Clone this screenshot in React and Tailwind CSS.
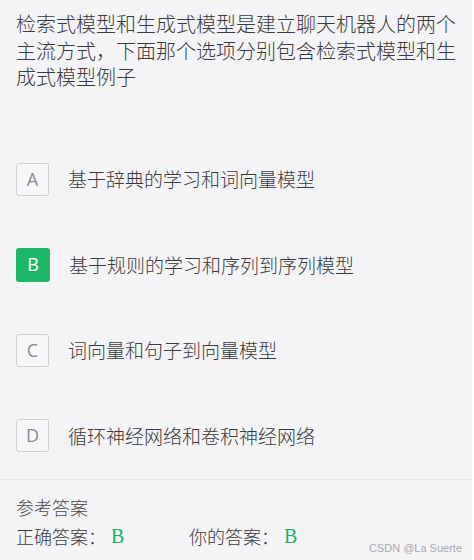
const options = [
  { key: 'A', text: '基于辞典的学习和词向量模型' },
  { key: 'B', text: '基于规则的学习和序列到序列模型', selected: true },
  { key: 'C', text: '词向量和句子到向量模型' },
  { key: 'D', text: '循环神经网络和卷积神经网络' },
];

const cjk = { fontFamily: '"Noto Sans CJK SC", "Noto Sans", sans-serif' };

export default function App() {
  return (
    <div className="w-[474px] h-[560px] bg-white overflow-hidden" style={cjk}>
      <div className="w-[472px] h-[560px] bg-[#f4f4f7] flex flex-col">
        <p className="pl-4 pr-[8px] pt-[11px] text-[20px] leading-[26.5px] text-[#3a3a3a] font-light">
          检索式模型和生成式模型是建立聊天机器人的两个主流方式，下面那个选项分别包含检索式模型和生成式模型例子
        </p>

        <div className="flex flex-col mt-[46px]">
          {options.map(opt => (
            <div key={opt.key} className="flex items-center h-[85.5px] px-4">
              <div
                className={
                  opt.selected
                    ? 'w-[34px] h-[34px] rounded-[3px] bg-[#1cb868] flex items-center justify-center text-white text-[18px]'
                    : 'w-[33px] h-[33px] rounded-[3px] border border-[#cfcfd3] bg-[#f7f7f9] flex items-center justify-center text-[#8a8a8e] text-[18px]'
                }
                style={{ fontFamily: '"Open Sans", "Noto Sans", sans-serif' }}
              >
                {opt.key}
              </div>
              <span className="ml-[19px] text-[19px] text-[#3a3a3a] font-light">{opt.text}</span>
            </div>
          ))}
        </div>

        <div className="mt-auto border-t border-[#e6e6ea] h-[82px] px-4 pt-[15px] relative">
          <div className="text-[18px] leading-[24px] text-[#4a4a4a] font-light">参考答案</div>
          <div className="flex items-center mt-[5px] text-[18px] leading-[24px] text-[#3a3a3a] font-light">
            <span>正确答案：</span>
            <span
              className="text-[#1fae6c] text-[20px] ml-[5px] w-[78px]"
              style={{ fontFamily: '"Liberation Serif", serif' }}
            >
              B
            </span>
            <span>你的答案：</span>
            <span
              className="text-[#1fae6c] text-[20px] ml-[5px]"
              style={{ fontFamily: '"Liberation Serif", serif' }}
            >
              B
            </span>
          </div>
          <span
            className="absolute right-[10px] bottom-[4px] text-[11px] text-[#a8a8ac]"
            style={{ fontFamily: '"Liberation Sans", sans-serif' }}
          >
            CSDN @La Suerte
          </span>
        </div>
      </div>
    </div>
  );
}
